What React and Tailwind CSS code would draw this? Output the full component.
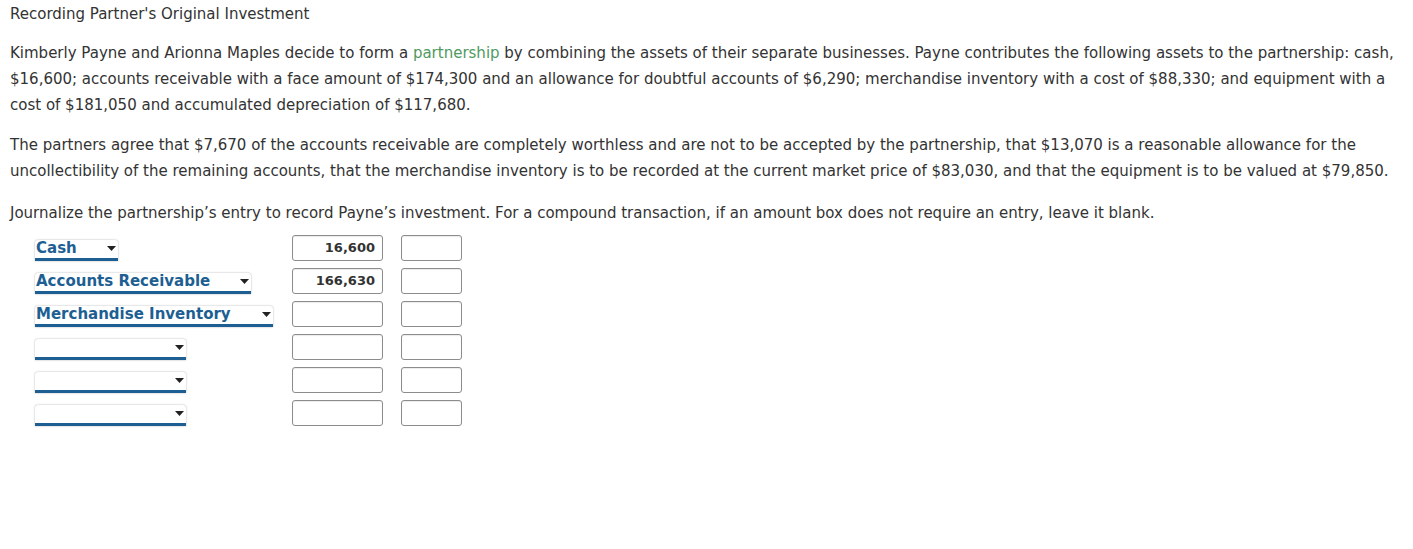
import React from "react";

const ROWS = [
  { account: "Cash", width: "w-[83px]", debit: "16,600" },
  { account: "Accounts Receivable", width: "w-[216px]", debit: "166,630" },
  { account: "Merchandise Inventory", width: "w-[238px]", debit: "" },
  { account: "", width: "w-[151px]", debit: "" },
  { account: "", width: "w-[151px]", debit: "" },
  { account: "", width: "w-[151px]", debit: "" },
];

const Caret = () => (
  <svg width="9" height="6" viewBox="0 0 9 6" className="shrink-0">
    <polygon points="0,0 9,0 4.5,5" fill="#222" />
  </svg>
);

const AccountSelect = ({ account, width }) => (
  <div
    className={`${width} h-[21px] flex items-center justify-between pl-[1px] pr-[2px] bg-white rounded-t-[3px] border-b-[3px] border-[#1d5f93] shadow-[0_0_2px_rgba(0,0,0,0.35)]`}
  >
    <span className="text-[15px] font-bold leading-none text-[#1d5f93] whitespace-nowrap">
      {account}
    </span>
    <Caret />
  </div>
);

const AmountBox = ({ value, width }) => (
  <div
    className={`${width} h-[26px] rounded-[3px] border border-[#8c8c8c] bg-white shadow-[inset_0_1px_1px_rgba(0,0,0,0.08)] flex items-center justify-end pr-[7px] text-[13px] font-bold text-[#333]`}
  >
    {value}
  </div>
);

export default function App() {
  return (
    <div
      className="w-[1413px] min-h-[549px] bg-white px-[10px] pt-[1px] text-[15px] leading-[26px] text-[#333]"
      style={{ fontFamily: "'DejaVu Sans', Verdana, sans-serif" }}
    >
      <div>Recording Partner's Original Investment</div>

      <p className="mt-[13px]">
        Kimberly Payne and Arionna Maples decide to form a{" "}
        <span className="text-[#4f9a62]">partnership</span> by combining the
        assets of their separate businesses. Payne contributes the following
        assets to the partnership: cash, $16,600; accounts receivable with a
        face amount of $174,300 and an allowance for doubtful accounts of
        $6,290; merchandise inventory with a cost of $88,330; and equipment
        with a cost of $181,050 and accumulated depreciation of $117,680.
      </p>

      <p className="mt-[14px]">
        The partners agree that $7,670 of the accounts receivable are
        completely worthless and are not to be accepted by the partnership,
        that $13,070 is a reasonable allowance for the uncollectibility of the
        remaining accounts, that the merchandise inventory is to be recorded
        at the current market price of $83,030, and that the equipment is to
        be valued at $79,850.
      </p>

      <p className="mt-[16px]">
        Journalize the partnership’s entry to record Payne’s investment. For a
        compound transaction, if an amount box does not require an entry,
        leave it blank.
      </p>

      <div className="mt-[9px] pl-[25px] flex flex-col gap-[7px]">
        {ROWS.map((row, i) => (
          <div key={i} className="flex items-center h-[26px]">
            <div className="w-[257px] flex items-center pt-[4px]">
              <AccountSelect account={row.account} width={row.width} />
            </div>
            <AmountBox value={row.debit} width="w-[91px]" />
            <div className="w-[18px]" />
            <AmountBox value="" width="w-[61px]" />
          </div>
        ))}
      </div>
    </div>
  );
}
